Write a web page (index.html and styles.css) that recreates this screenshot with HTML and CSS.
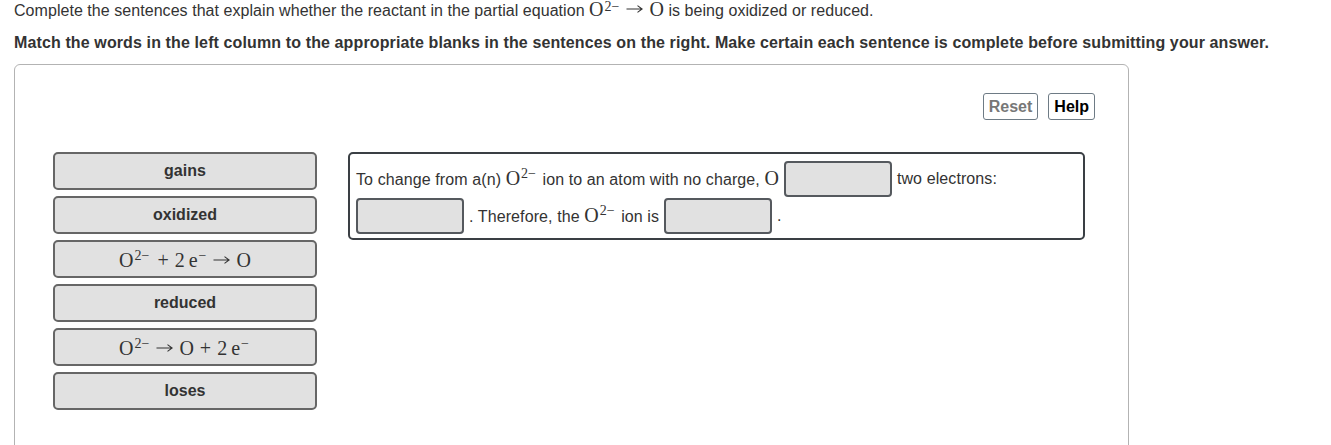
FILE: index.html
```html
<!DOCTYPE html>
<html>
<head>
<meta charset="utf-8">
<link rel="stylesheet" href="styles.css">
</head>
<body>
<p class="prompt">Complete the sentences that explain whether the reactant in the partial equation <span class="math">O<sup>2−</sup><svg class="arr" viewBox="0 0 17 10" aria-label="→"><path d="M0.5 5H16.2M11.5 1.6L16.2 5L11.5 8.4"/></svg>O</span> is being oxidized or reduced.</p>
<p class="instr">Match the words in the left column to the appropriate blanks in the sentences on the right. Make certain each sentence is complete before submitting your answer.</p>
<div class="panel">
  <div class="toolbar">
    <button class="tbtn reset">Reset</button>
    <button class="tbtn help">Help</button>
  </div>
  <div class="work">
    <div class="tiles">
      <div class="tile">gains</div>
      <div class="tile">oxidized</div>
      <div class="tile mtile"><span class="math">O<sup>2−</sup><span class="op">+</span>2<span class="th"></span>e<sup>−</sup><svg class="arr" viewBox="0 0 17 10" aria-label="→"><path d="M0.5 5H16.2M11.5 1.6L16.2 5L11.5 8.4"/></svg>O</span></div>
      <div class="tile">reduced</div>
      <div class="tile mtile"><span class="math">O<sup>2−</sup><svg class="arr" viewBox="0 0 17 10" aria-label="→"><path d="M0.5 5H16.2M11.5 1.6L16.2 5L11.5 8.4"/></svg>O<span class="op">+</span>2<span class="th"></span>e<sup>−</sup></span></div>
      <div class="tile">loses</div>
    </div>
    <div class="sentence">
      <div class="line">
        <span>To change from a(n) <span class="math">O<sup>2−</sup></span> ion to an atom with no charge, <span class="math">O</span></span>
        <span class="blank"></span>
        <span>two electrons:</span>
      </div>
      <div class="line">
        <span class="blank"></span>
        <span>. Therefore, the <span class="math">O<sup>2−</sup></span> ion is</span>
        <span class="blank"></span>
        <span>.</span>
      </div>
    </div>
  </div>
</div>
</body>
</html>
```

FILE: styles.css
```css
html, body {
  margin: 0;
  padding: 0;
  background: #fff;
}
body {
  padding: 0 14px;
  font-family: "Liberation Sans", Arial, sans-serif;
  color: #333;
}
.prompt {
  margin: 0;
  padding-top: 0;
  font-size: 16px;
  line-height: 20px;
  letter-spacing: 0.05px;
}
.instr {
  margin: 12px 0 0;
  font-size: 16px;
  font-weight: bold;
  line-height: 20px;
  letter-spacing: 0.12px;
}
.math {
  font-family: "Liberation Serif", "Times New Roman", serif;
  font-size: 20px;
  color: #333;
  white-space: nowrap;
  letter-spacing: 0;
}
.math sup {
  font-size: 14px;
  vertical-align: 0;
  position: relative;
  top: -7px;
  margin-left: 1px;
  margin-right: 2px;
  line-height: 0;
}
.prompt .math sup { top: -5px; }
.arr {
  display: inline-block;
  width: 17px;
  height: 10px;
  margin: 0 6px 0 5px;
  vertical-align: 2px;
  fill: none;
  stroke: #333;
  stroke-width: 1.1;
}
.op { margin: 0 6px; }
.th { display: inline-block; width: 4px; }
.prompt .math { line-height: 18px; }
.panel {
  margin-top: 11px;
  width: 1115px;
  height: 400px;
  border: 1px solid #b3b3b3;
  border-radius: 6px;
  box-sizing: border-box;
}
.toolbar {
  display: flex;
  justify-content: flex-end;
  gap: 10px;
  padding: 28px 33px 0 0;
}
.tbtn {
  height: 27px;
  padding: 0 5px;
  background: #fff;
  border: 1px solid #6e7b85;
  border-radius: 3px;
  font-family: "Liberation Sans", Arial, sans-serif;
  font-size: 16px;
  font-weight: bold;
  line-height: 25px;
}
.reset { color: #777; }
.help { color: #000; }
.work {
  display: flex;
  gap: 31px;
  padding: 32px 0 0 38px;
}
.tiles {
  display: flex;
  flex-direction: column;
  gap: 6px;
  width: 264px;
}
.tile {
  height: 38px;
  box-sizing: border-box;
  border: 2px solid #666;
  border-radius: 5px;
  background: #e1e1e1;
  display: flex;
  align-items: center;
  justify-content: center;
  font-size: 16px;
  font-weight: bold;
  color: #333;
}
.mtile { font-weight: normal; padding-top: 2px; }
.sentence {
  width: 737px;
  height: 88px;
  box-sizing: border-box;
  border: 2px solid #3a3f44;
  border-radius: 5px;
  padding: 6px 0 0 6px;
  font-size: 16px;
  color: #333;
  letter-spacing: 0.1px;
}
.line {
  display: flex;
  align-items: center;
  gap: 5px;
  height: 37px;
}
.blank {
  display: inline-block;
  width: 108px;
  height: 36px;
  box-sizing: border-box;
  border: 2px solid #55595e;
  border-radius: 4px;
  background: #e1e1e1;
}
```
